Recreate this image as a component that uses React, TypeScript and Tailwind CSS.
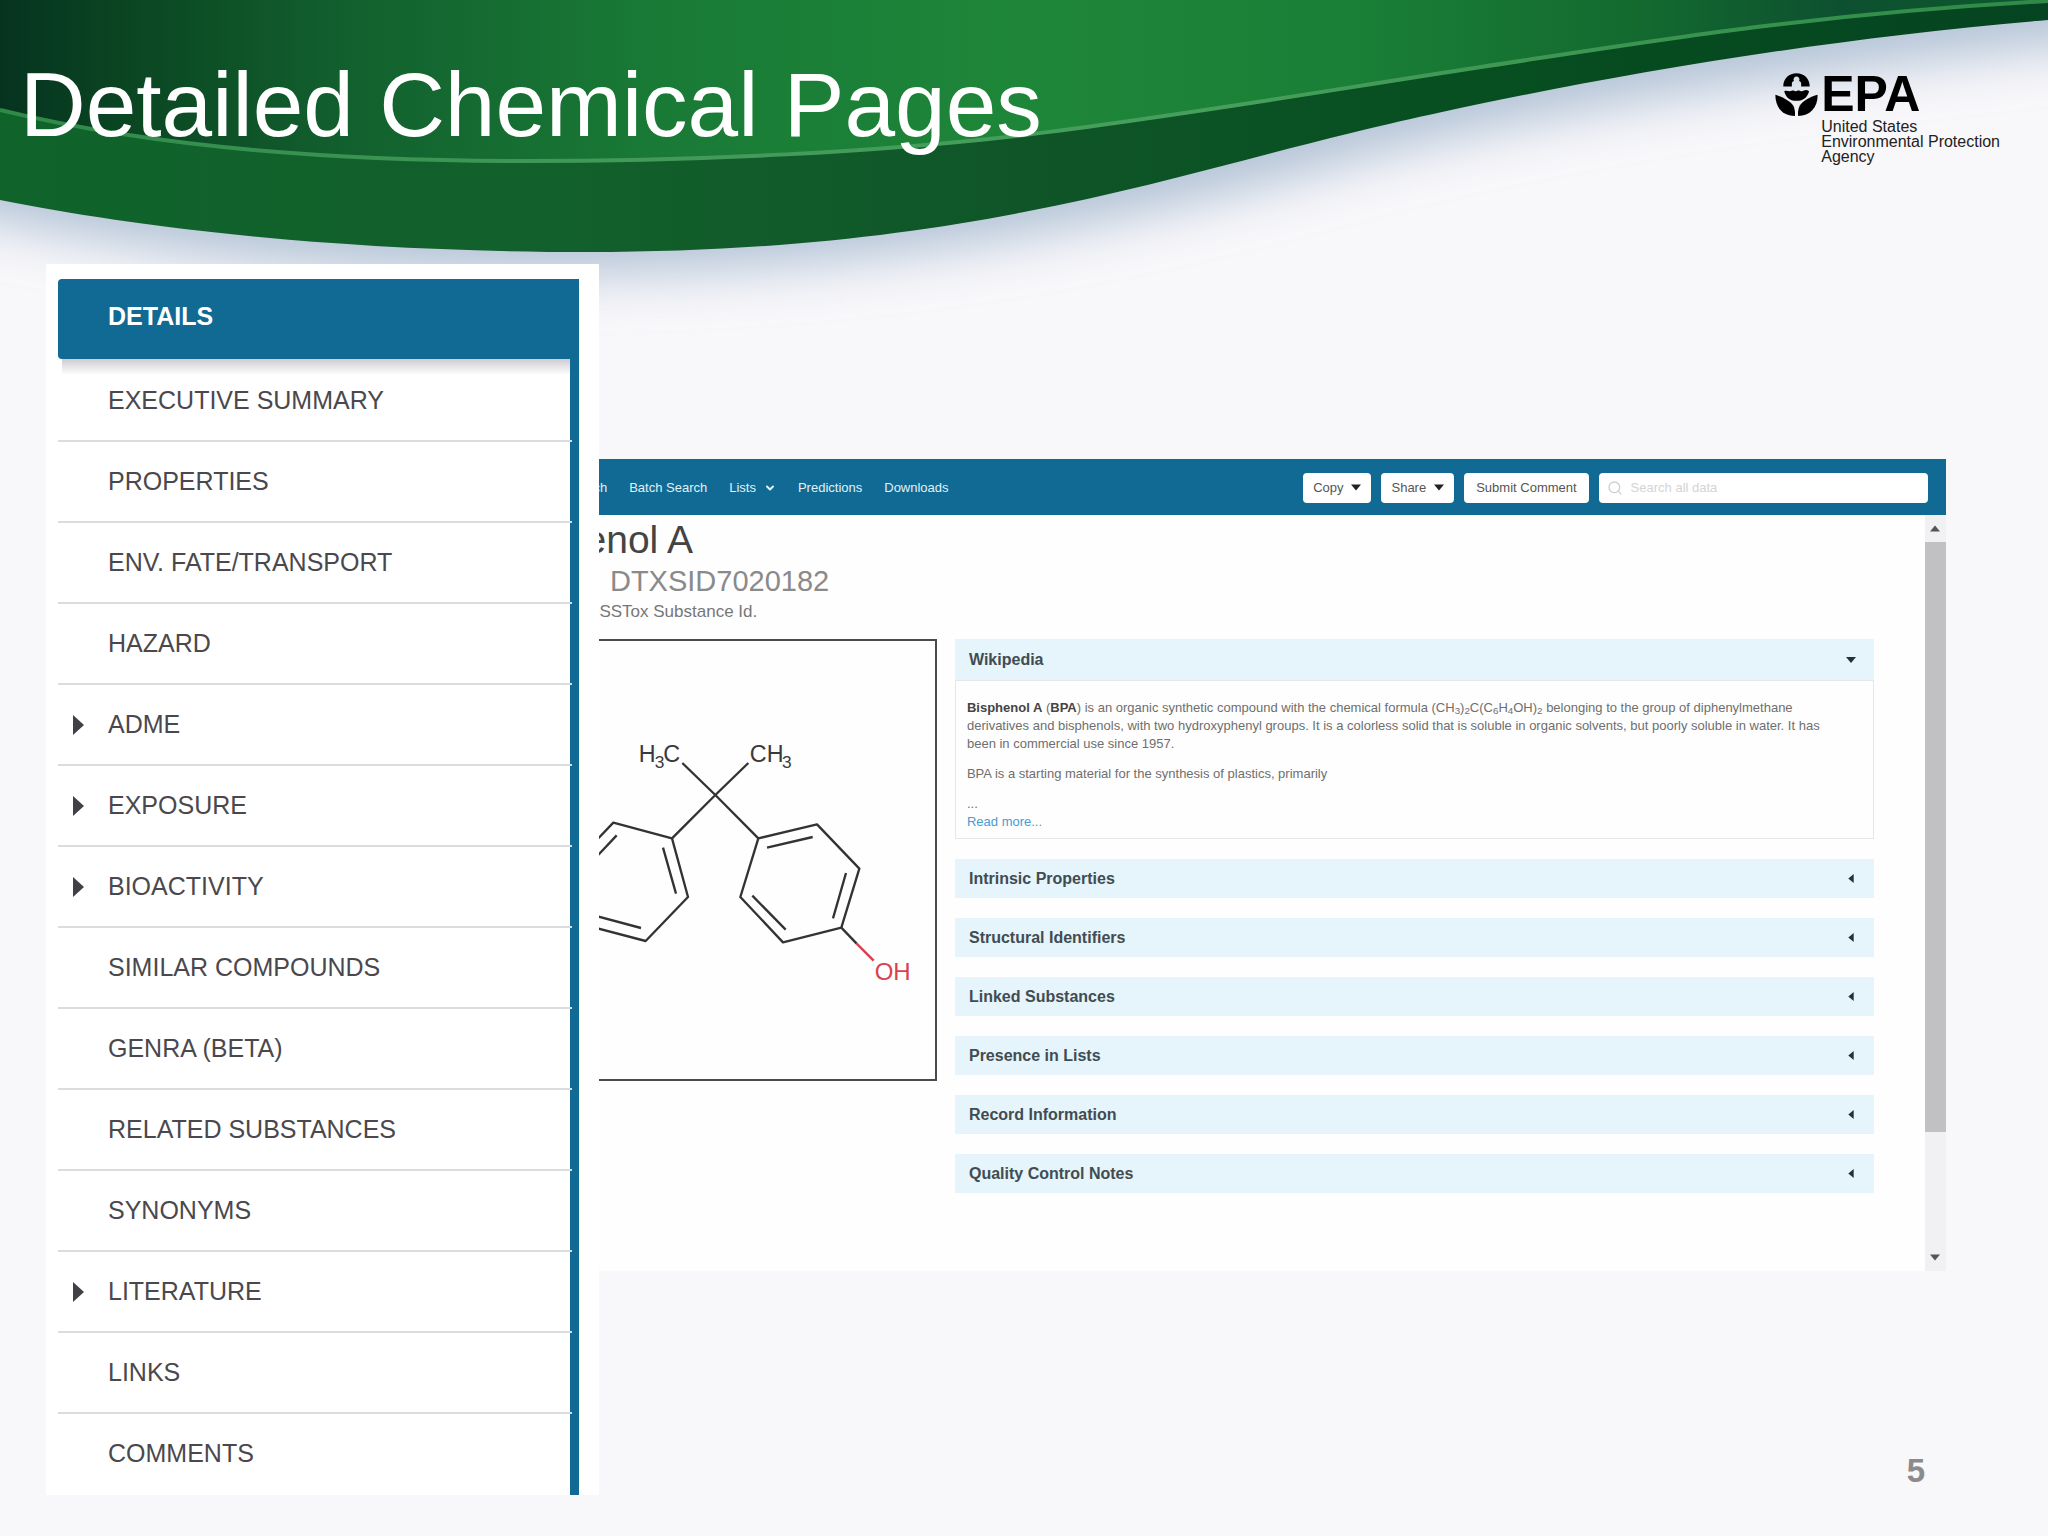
import { useState } from 'react';
import { Search, ChevronDown } from 'lucide-react';

const menu = [
  { label: 'EXECUTIVE SUMMARY' },
  { label: 'PROPERTIES' },
  { label: 'ENV. FATE/TRANSPORT' },
  { label: 'HAZARD' },
  { label: 'ADME', nested: true },
  { label: 'EXPOSURE', nested: true },
  { label: 'BIOACTIVITY', nested: true },
  { label: 'SIMILAR COMPOUNDS' },
  { label: 'GENRA (BETA)' },
  { label: 'RELATED SUBSTANCES' },
  { label: 'SYNONYMS' },
  { label: 'LITERATURE', nested: true },
  { label: 'LINKS' },
  { label: 'COMMENTS' },
];

const sections = [
  'Intrinsic Properties',
  'Structural Identifiers',
  'Linked Substances',
  'Presence in Lists',
  'Record Information',
  'Quality Control Notes',
];

function Caret({ className }: { className: string }) {
  return (
    <svg viewBox="0 0 10 6" className={className} aria-hidden="true">
      <path d="M0 0H10L5 6Z" fill="currentColor" />
    </svg>
  );
}

function Swoosh() {
  return (
    <svg
      viewBox="0 0 2048 360"
      preserveAspectRatio="none"
      className="absolute inset-x-0 top-0 w-full h-[360px]"
      aria-hidden="true"
    >
      <defs>
        <linearGradient id="top" x1="0" x2="1" y1="0" y2="0">
          <stop offset="0" stopColor="#06331f" />
          <stop offset="0.06" stopColor="#0a4522" />
          <stop offset="0.17" stopColor="#12602e" />
          <stop offset="0.32" stopColor="#197a36" />
          <stop offset="0.5" stopColor="#1e8639" />
          <stop offset="0.66" stopColor="#1a7f37" />
          <stop offset="0.8" stopColor="#136a2f" />
          <stop offset="0.9" stopColor="#0d5030" />
          <stop offset="1" stopColor="#0c5a2c" />
        </linearGradient>
        <linearGradient id="band" x1="0" x2="1" y1="0" y2="0">
          <stop offset="0" stopColor="#10632b" />
          <stop offset="0.3" stopColor="#125f2b" />
          <stop offset="0.5" stopColor="#0f5528" />
          <stop offset="0.7" stopColor="#074f20" />
          <stop offset="1" stopColor="#054420" />
        </linearGradient>
        <linearGradient id="line" x1="0" x2="1" y1="0" y2="0">
          <stop offset="0" stopColor="#2f8a48" />
          <stop offset="0.3" stopColor="#42995a" />
          <stop offset="0.6" stopColor="#46a05a" />
          <stop offset="1" stopColor="#2f8a48" />
        </linearGradient>
        <filter id="soft" x="-5%" y="-20%" width="110%" height="160%">
          <feGaussianBlur stdDeviation="26" />
        </filter>
      </defs>
      <path
        d="M-60 -60V208C180 262 380 276 588 274C860 268 1080 238 1351 161C1546 110 1800 72 2110 40V-60Z"
        fill="#b2c3d6"
        filter="url(#soft)"
      />
      <path
        d="M0 0V200C131 226 330 252 588 252C760 252 900 236 1024 212C1140 190 1240 160 1351 133C1500 97 1760 44 2048 20V0Z"
        fill="url(#band)"
      />
      <path
        d="M0 0V110C131 142 300 161 523 161C700 161 880 152 1024 135C1180 116 1330 90 1481 67C1640 43 1808 14 2048 1V0Z"
        fill="url(#top)"
      />
      <path
        d="M0 110C131 142 300 161 523 161C700 161 880 152 1024 135C1180 116 1330 90 1481 67C1640 43 1808 14 2048 1"
        fill="none"
        stroke="url(#line)"
        strokeWidth="4"
      />
    </svg>
  );
}

function EpaLogo() {
  return (
    <div className="flex gap-[3px] text-black">
      <svg viewBox="98 68 128 130" className="w-[43px] h-[43px] mt-1" aria-hidden="true">
        <path d="M122 109C122 84 140 69 162 69S202 84 202 109H176V98A8 8 0 0 0 170 92A9 9 0 1 0 154 92A8 8 0 0 0 148 98V109Z" />
        <path d="M125 123C133 119 139 126 147 122S158 126 164 122S176 126 183 122S194 120 200 123C196 140 184 152 162 152S129 140 125 123Z" />
        <path d="M98 134C120 140 142 152 152 166C158 178 158 190 157 198C122 198 98 174 98 134Z" />
        <path d="M226 134C204 140 182 152 172 166C166 178 166 190 167 198C202 198 226 174 226 134Z" />
      </svg>
      <div>
        <p className="text-[50px] leading-[50px] font-bold">EPA</p>
        <p className="text-base leading-[15px] text-[#222]">
          United States
          <br />
          Environmental Protection
          <br />
          Agency
        </p>
      </div>
    </div>
  );
}

function Sidebar() {
  return (
    <nav
      aria-label="Chemical sections"
      className="relative z-10 ml-[46px] w-[27%] shrink-0 self-start bg-white pt-[15px] pl-3 pr-5"
    >
      <a
        href="#details"
        className="relative z-10 flex items-center h-20 pb-1 pl-[50px] rounded-l bg-[#106a94] text-white text-[25px] font-bold"
      >
        DETAILS
      </a>
      <ul className="relative border-r-[9px] border-[#106a94] py-[2px]">
        <li
          aria-hidden="true"
          className="absolute left-1 right-0 top-0 h-4 bg-linear-to-b from-[#cfccd1] to-white"
        />
        {menu.map(item => (
          <li key={item.label} className="relative -mr-[2px] border-b-2 border-[#dddbe0] last:border-b-0">
            <a href="#section" className="flex items-center h-[79px] text-[25px] text-[#4b484d]">
              <span className="w-[50px] pl-[15px]">
                {item.nested && (
                  <svg viewBox="0 0 11 20" className="w-[11px] h-5" aria-hidden="true">
                    <path d="M0 0L11 10L0 20Z" fill="#434045" />
                  </svg>
                )}
              </span>
              {item.label}
            </a>
          </li>
        ))}
      </ul>
    </nav>
  );
}

function TopBar() {
  return (
    <div className="flex items-center justify-between h-14 bg-[#106a94] pr-[18px] pt-px">
      <nav aria-label="Dashboard" className="flex items-center gap-[22px] text-[13px] text-[#e3f0f6] -ml-[33px]">
        <a href="#search">Search</a>
        <a href="#batch">Batch Search</a>
        <button type="button" className="flex items-center gap-2">
          Lists
          <ChevronDown className="w-3 h-3" strokeWidth={4} />
        </button>
        <a href="#predictions">Predictions</a>
        <a href="#downloads">Downloads</a>
      </nav>
      <div className="flex items-center gap-[10px] text-[13px] text-[#555]">
        <button type="button" className="flex items-center gap-2 h-[30px] px-[10px] rounded-sm bg-white">
          Copy
          <Caret className="w-[10px] h-[7px] text-[#222]" />
        </button>
        <button type="button" className="flex items-center gap-2 h-[30px] px-[10px] rounded-sm bg-white">
          Share
          <Caret className="w-[10px] h-[7px] text-[#222]" />
        </button>
        <button type="button" className="h-[30px] px-3 rounded-sm bg-white">
          Submit Comment
        </button>
        <label className="flex items-center gap-2 h-[30px] w-[329px] px-2 rounded-sm bg-white">
          <Search className="w-4 h-4 text-[#cfcfcf]" />
          <input
            type="search"
            aria-label="Search all data"
            placeholder="Search all data"
            className="flex-1 outline-none placeholder:text-[#d4d4d4]"
          />
        </label>
      </div>
    </div>
  );
}

function Structure() {
  return (
    <div className="w-[338px] shrink-0 border-2 border-l-0 border-[#4a4a4a] self-start">
      <svg viewBox="27 32 1008 1314" className="block w-full h-auto" role="img" aria-label="Bisphenol A structure">
        <g fill="none" stroke="#333" strokeWidth="7" strokeLinejoin="round">
          <path d="M277 398L376 494L505 624M475 398L376 494L246 624" />
          <path d="M505 624L681 582L808 715L754 892L579 936L451 800Z" />
          <path d="M531 652L668 620M768 728L729 864M587 898L487 796" />
          <path d="M754 892L800 940" />
          <path d="M0 650L70 577L246 624L294 800L167 932L0 888" />
          <path d="M0 700L80 615M219 652L258 790M153 893L0 852" />
        </g>
        <path d="M800 940L851 991" stroke="#dc3c50" strokeWidth="7" />
        <g className="font-['Liberation_Sans']" fontSize="70" fill="#3a3a3a">
          <text x="146" y="394">H</text>
          <text x="194" y="412" fontSize="52">3</text>
          <text x="220" y="394">C</text>
          <text x="479" y="394">C</text>
          <text x="530" y="394">H</text>
          <text x="576" y="412" fontSize="52">3</text>
          <text x="854" y="1050" fontSize="72" fill="#d9414f">OH</text>
        </g>
      </svg>
    </div>
  );
}

function Accordion() {
  const [open, setOpen] = useState(true);

  return (
    <div className="flex-1 flex flex-col gap-5">
      <section>
        <button
          type="button"
          aria-expanded={open}
          onClick={() => setOpen(!open)}
          className="flex w-full items-center justify-between h-[41px] pl-[14px] pr-[18px] bg-[#e6f4fb] text-base font-bold text-[#414c52]"
        >
          Wikipedia
          <Caret className="w-[10px] h-[6px] text-[#22323a]" />
        </button>
        {open && (
          <div className="border border-[#e4e8ec] pl-[11px] pr-8 pt-[18px] pb-[7px] text-[13px] leading-[18px] text-[#6e6e6e]">
            <p>
              <b className="text-[#444]">Bisphenol A</b> (<b className="text-[#444]">BPA</b>) is an organic synthetic compound
              with the chemical formula (CH<sub>3</sub>)<sub>2</sub>C(C<sub>6</sub>H<sub>4</sub>OH)<sub>2</sub> belonging to
              the group of diphenylmethane derivatives and bisphenols, with two hydroxyphenyl groups. It is a colorless solid
              that is soluble in organic solvents, but poorly soluble in water. It has been in commercial use since 1957.
            </p>
            <p className="mt-3">BPA is a starting material for the synthesis of plastics, primarily</p>
            <p className="mt-3">...</p>
            <a href="#wikipedia" className="block text-[#4a9bd0]">Read more...</a>
          </div>
        )}
      </section>
      {sections.map(name => (
        <button
          key={name}
          type="button"
          aria-expanded="false"
          className="flex items-center justify-between h-[39px] pl-[14px] pr-5 bg-[#e6f4fb] text-base font-bold text-[#414c52]"
        >
          {name}
          <svg viewBox="0 0 6 10" className="w-[6px] h-[9px] text-[#22323a]" aria-hidden="true">
            <path d="M6 0V10L0 5Z" fill="currentColor" />
          </svg>
        </button>
      ))}
    </div>
  );
}

function Dashboard() {
  return (
    <section className="flex-1 min-w-0 mt-[195px] mr-[5%] self-start overflow-hidden bg-[#fefefe]">
      <TopBar />
      <div className="flex">
        <div className="flex-1 min-w-0 pb-[78px] pr-[51px]">
          <div className="-ml-28 h-[124px] pt-[7px] whitespace-nowrap">
            <h2 className="text-[39px] leading-9 text-[#444]">Bisphenol A</h2>
            <p className="pl-[123px] text-[29px] leading-[46px] text-[#8a8a8a]">DTXSID7020182</p>
            <p className="text-[17px] leading-4 text-[#777]">Searched by DSSTox Substance Id.</p>
          </div>
          <div className="flex gap-[18px]">
            <Structure />
            <Accordion />
          </div>
        </div>
        <div className="flex flex-col items-center justify-between w-[21px] bg-[#f1f0f2] text-[#555]">
          <Caret className="w-[10px] h-[7px] my-[10px] rotate-180" />
          <div className="w-full flex-1">
            <div className="h-[84%] bg-[#c1c0c2]" />
          </div>
          <Caret className="w-[10px] h-[7px] my-[10px]" />
        </div>
      </div>
    </section>
  );
}

export default function App() {
  return (
    <div className="relative min-h-screen overflow-hidden bg-[#f8f7fa] font-['Liberation_Sans',sans-serif]">
      <Swoosh />
      <header className="relative flex items-start justify-between h-[264px] pl-5 pr-12">
        <h1 className="pt-[53px] text-[91px] leading-[104px] text-white">Detailed Chemical Pages</h1>
        <div className="pt-[69px]">
          <EpaLogo />
        </div>
      </header>
      <main className="relative flex">
        <Sidebar />
        <Dashboard />
      </main>
      <footer className="absolute bottom-[47px] right-[123px] text-[33px] leading-9 font-bold text-[#8b8a8d]">5</footer>
    </div>
  );
}
